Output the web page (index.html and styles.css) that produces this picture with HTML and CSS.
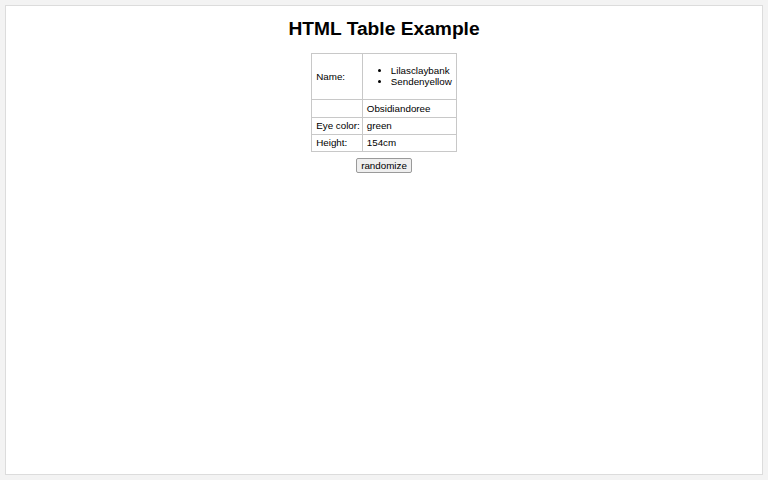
FILE: index.html
```html
<!DOCTYPE html>
<html>
<head>
<meta charset="utf-8">
<link rel="stylesheet" href="styles.css">
</head>
<body>
<div class="page">
  <h1 class="title">HTML Table Example</h1>
  <table class="info">
    <tr class="row-name">
      <td class="label">Name:</td>
      <td class="value">
        <ul class="names">
          <li>Lilasclaybank</li>
          <li>Sendenyellow</li>
        </ul>
      </td>
    </tr>
    <tr>
      <td class="label"></td>
      <td class="value tall">Obsidiandoree</td>
    </tr>
    <tr>
      <td class="label">Eye color:</td>
      <td class="value">green</td>
    </tr>
    <tr>
      <td class="label">Height:</td>
      <td class="value">154cm</td>
    </tr>
  </table>
  <div class="actions">
    <button class="btn">randomize</button>
  </div>
</div>
</body>
</html>
```
FILE: styles.css
```css
html, body {
  margin: 0;
  padding: 0;
}
body {
  background: #f3f3f3;
  padding: 5px;
  font-family: "Liberation Sans", Arial, sans-serif;
  color: #000;
}
.page {
  box-sizing: border-box;
  height: 470px;
  background: #fff;
  border: 1px solid #dcdcdc;
  display: flex;
  flex-direction: column;
  align-items: center;
}
.title {
  font-size: 19.2px;
  font-weight: bold;
  margin: 12px 0 13px;
  line-height: 22px;
}
.info {
  border-collapse: collapse;
  border: 1px solid #999;
  font-size: 9.8px;
}
.info td {
  border: 1px solid #c8c8c8;
  padding: 2px 3px 2px 4px;
  line-height: 12px;
  height: 12px;
  white-space: nowrap;
}
.info td.tall {
  height: 13px;
}
.info .label {
  padding-right: 2px;
}
.info .value {
  padding-right: 4px;
}
.names {
  margin: 9px 0 10px;
  padding-left: 24px;
  line-height: 11px;
}
.actions {
  display: flex;
  margin-top: 6px;
}
.btn {
  font-family: "Liberation Sans", Arial, sans-serif;
  font-size: 9.8px;
  line-height: 11px;
  padding: 1px 4px;
  background: #efefef;
  border: 1px solid #9a9a9a;
  border-radius: 2px;
  color: #000;
}
```
